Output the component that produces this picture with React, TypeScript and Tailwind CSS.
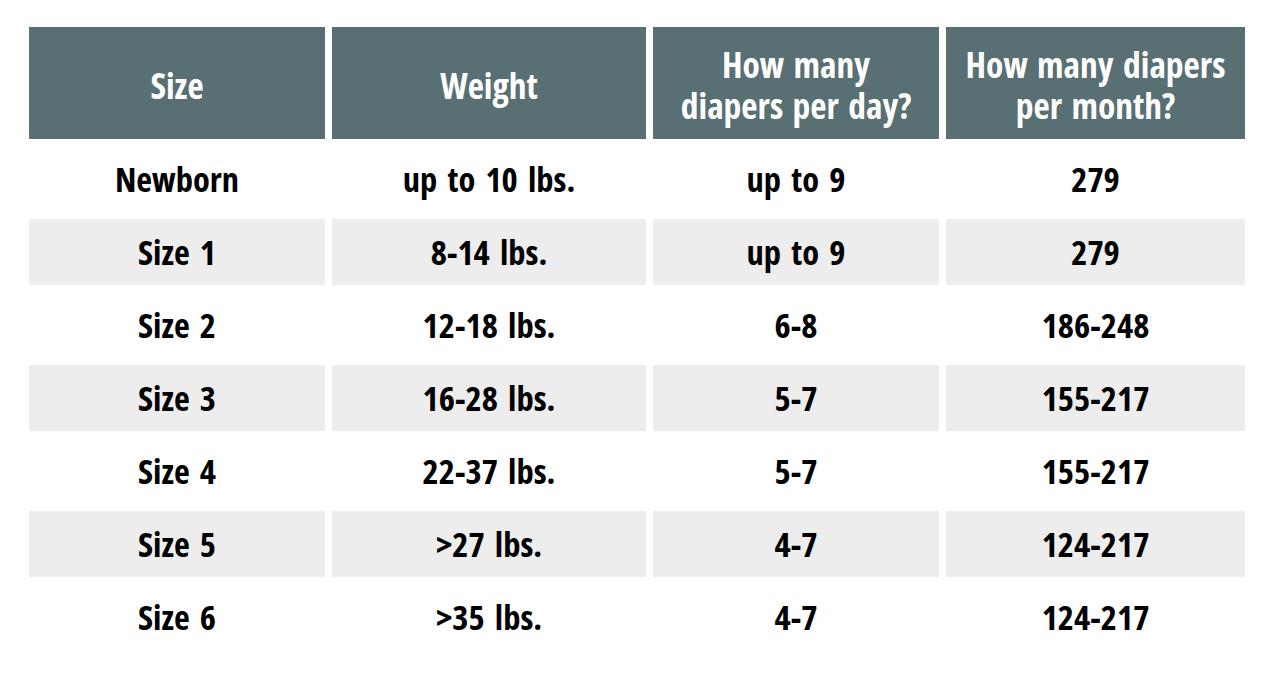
import React from "react";

const rows = [
  ["Newborn", "up to 10 lbs.", "up to 9", "279"],
  ["Size 1", "8-14 lbs.", "up to 9", "279"],
  ["Size 2", "12-18 lbs.", "6-8", "186-248"],
  ["Size 3", "16-28 lbs.", "5-7", "155-217"],
  ["Size 4", "22-37 lbs.", "5-7", "155-217"],
  ["Size 5", ">27 lbs.", "4-7", "124-217"],
  ["Size 6", ">35 lbs.", "4-7", "124-217"],
];

const headers = ["Size", "Weight", "How many\ndiapers per day?", "How many diapers\nper month?"];

export default function App() {
  return (
    <div
      className="w-[1275px] h-[682px] bg-white pl-[29px] pt-[27px]"
      style={{ fontFamily: '"Open Sans", "DejaVu Sans", sans-serif', fontStretch: "75%" }}
    >
      <div className="grid grid-cols-[296px_314px_286px_299px] gap-x-[7px] gap-y-[7px] font-bold">
        {headers.map((h, i) => (
          <div
            key={i}
            className="h-[112px] pt-[4px] bg-[#586f73] text-white flex items-center justify-center text-center text-[35.5px] leading-[41px] [word-spacing:3px] whitespace-pre-line"
          >
            {h}
          </div>
        ))}
        {rows.map((r, ri) =>
          r.map((c, ci) => (
            <div
              key={`${ri}-${ci}`}
              className={`h-[66px] flex items-center justify-center text-[34.5px] [word-spacing:4px] text-black ${
                ri % 2 === 1 ? "bg-[#ededed]" : "bg-white"
              }`}
            >
              {c}
            </div>
          ))
        )}
      </div>
    </div>
  );
}
